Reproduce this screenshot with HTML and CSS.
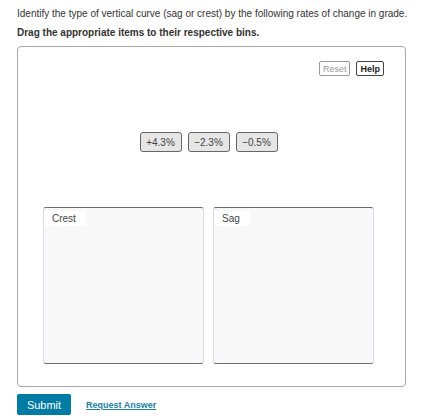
FILE: index.html
```html
<!DOCTYPE html>
<html>
<head>
<meta charset="utf-8">
<link rel="stylesheet" href="styles.css">
</head>
<body>
<div class="page">
  <p class="prompt">Identify the type of vertical curve (sag or crest) by the following rates of change in grade.</p>
  <p class="instr">Drag the appropriate items to their respective bins.</p>
  <div class="board">
    <div class="tools">
      <button class="btn reset">Reset</button>
      <button class="btn help">Help</button>
    </div>
    <div class="tiles">
      <span class="tile">+4.3%</span>
      <span class="tile">&minus;2.3%</span>
      <span class="tile">&minus;0.5%</span>
    </div>
    <div class="bins">
      <div class="bin"><span class="label">Crest</span></div>
      <div class="bin"><span class="label">Sag</span></div>
    </div>
  </div>
  <div class="actions">
    <button class="submit">Submit</button>
    <a class="request" href="#">Request Answer</a>
  </div>
</div>
</body>
</html>
```
FILE: styles.css
```css
html, body { margin: 0; padding: 0; background: #fff; }
body { font-family: "Liberation Sans", Arial, sans-serif; color: #333; }
.page { padding: 8px 0 0 17px; width: 389px; }
.prompt { margin: 0; font-size: 10px; line-height: 12px; color: #333; white-space: nowrap; }
.instr { margin: 7px 0 0; font-size: 10px; line-height: 12px; font-weight: bold; color: #333; white-space: nowrap; }
.board {
  margin-top: 7px;
  border: 1px solid #aaa;
  border-radius: 4px;
  height: 341px;
  box-sizing: border-box;
  padding: 14px 21px 0 25px;
}
.tools { display: flex; justify-content: flex-end; gap: 6px; }
.btn {
  font-family: "Liberation Sans", Arial, sans-serif;
  font-size: 9px;
  padding: 0 3px;
  height: 15px;
  background: #fff;
  border: 1px solid #777;
  border-radius: 2px;
}
.reset { color: #999; border-color: #999; }
.help { color: #222; font-weight: bold; border-color: #444; }
.tiles { display: flex; justify-content: center; gap: 6px; margin-top: 56px; padding-right: 10px; }
.tile {
  display: inline-flex; align-items: center; justify-content: center;
  width: 42px; height: 20px; box-sizing: border-box;
  background: #e6e6e6;
  border: 1px solid #666;
  border-radius: 3px;
  font-size: 10px; color: #444;
}
.bins { display: flex; gap: 9px; margin-top: 55px; }
.bin {
  width: 161px; height: 157px; box-sizing: border-box;
  background: #f8f8f8;
  border: 1px solid #dcd9ee;
  border-top-color: #6d6a7f;
  border-bottom-color: #6d6a7f;
  border-radius: 3px;
}
.label {
  display: inline-block;
  background: #fff;
  padding: 2px 10px 2px 8px;
  font-size: 10px; line-height: 11px; color: #444;
}
.actions { display: flex; align-items: center; gap: 15px; margin-top: 7px; }
.submit {
  font-family: "Liberation Sans", Arial, sans-serif;
  background: #007ba3; color: #fff; border: none; border-radius: 2px;
  width: 54px; height: 21px; font-size: 11px; padding: 0;
}
.request { color: #1b7fa6; font-size: 9px; font-weight: bold; text-decoration: underline; }
```
